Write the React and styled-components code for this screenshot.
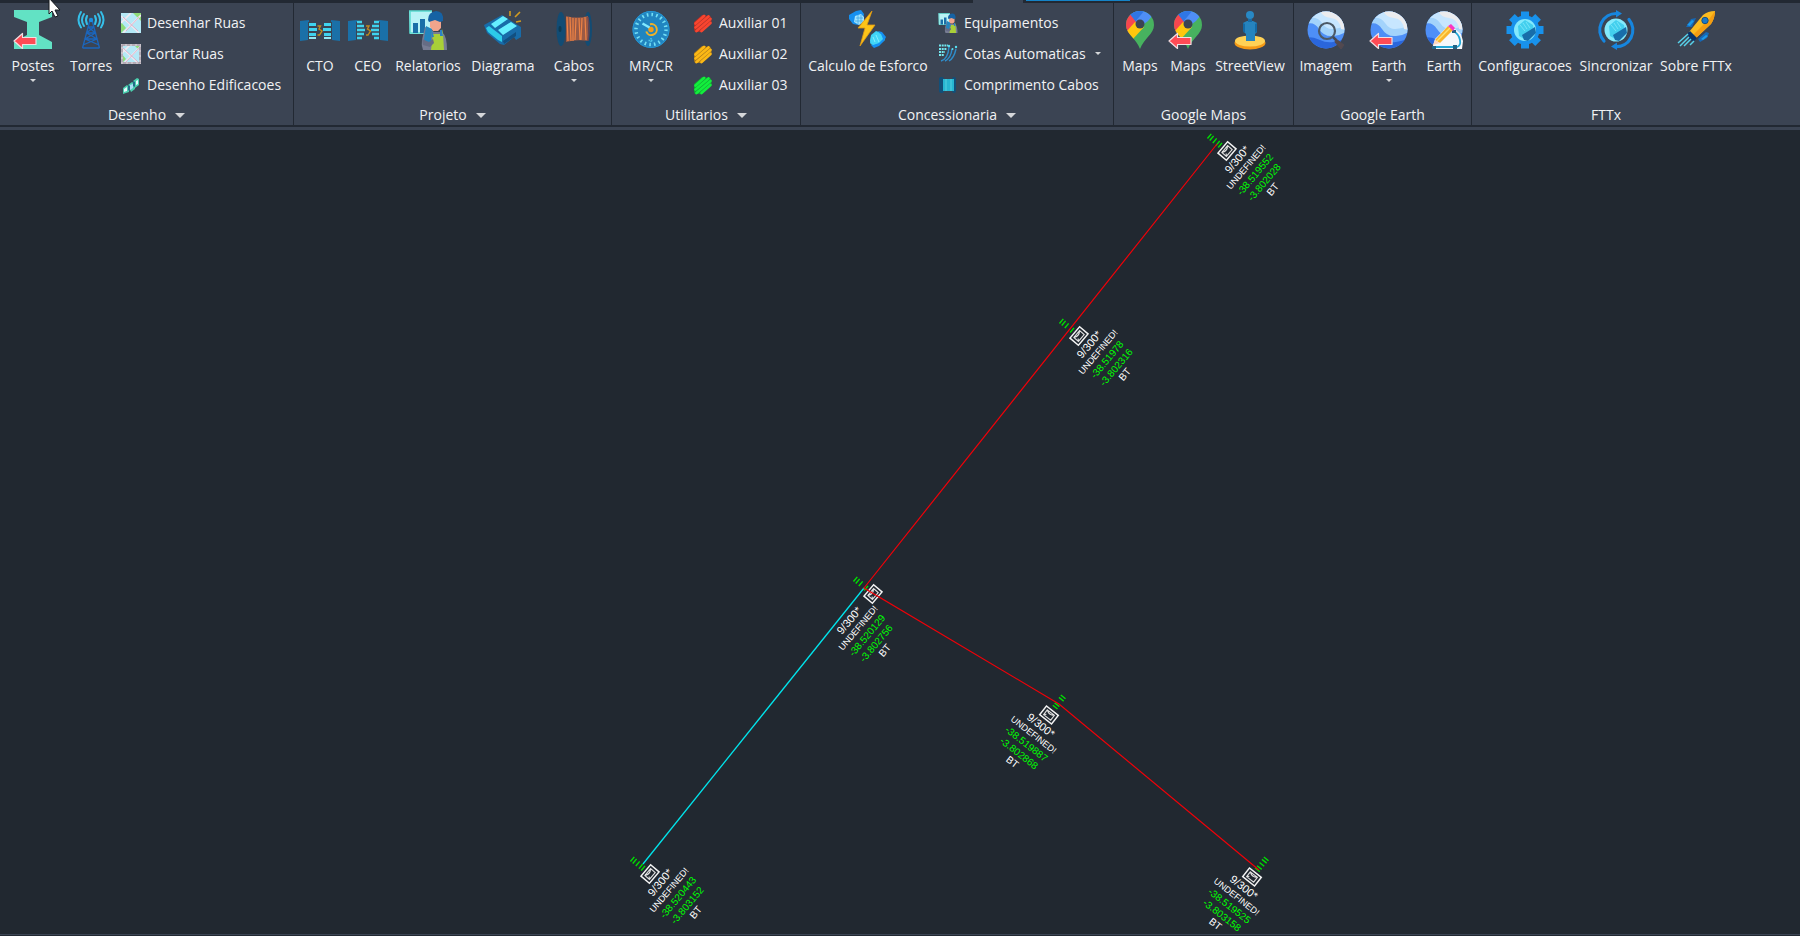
import React, { useId } from "react";
import styled, { createGlobalStyle } from "styled-components";

// css
const GlobalStyle = createGlobalStyle`
  * {
    box-sizing: border-box;
  }
  body {
    margin: 0;
    background: #212830;
    font-family: "Open Sans", "Noto Sans", sans-serif;
    overflow: hidden;
  }
`;
const Page = styled.div`
  display: flex;
  flex-direction: column;
  height: 100vh;
`;
const TabStrip = styled.div`
  height: 3px;
  flex: none;
  background: #222933;
  display: flex;
  padding-left: 973px;
  gap: 3px;
`;
const Tab = styled.div`
  width: ${(props) => props.$width};
  height: ${(props) => (props.$active ? "1px" : "3px")};
  background: ${(props) => (props.$active ? "#1583c7" : "#3b4453")};
`;
const Ribbon = styled.header`
  display: flex;
  flex: none;
  background: #3b4453;
  border-bottom: 2px solid #222933;
`;
const Panel = styled.section`
  flex: none;
  width: ${(props) => props.$width};
  display: flex;
  flex-direction: column;
  border-right: ${(props) => (props.$last ? "none" : "1px solid #222933")};
`;
const PanelBody = styled.div`
  display: flex;
  height: 100px;
  padding: ${(props) => props.$pad || "4px 0 0 2px"};
`;
const PanelTitle = styled.button`
  display: flex;
  align-items: center;
  justify-content: center;
  gap: 9px;
  height: 22px;
  padding: 2px 0 0;
  border: none;
  background: none;
  color: #f1f2f4;
  font-family: inherit;
  font-size: 14px;
  line-height: 20px;
`;
const Arrow = styled.span`
  border-left: ${(props) => props.$size} solid transparent;
  border-right: ${(props) => props.$size} solid transparent;
  border-top: ${(props) => props.$size} solid #d5d7da;
`;
const BigButton = styled.button`
  flex: none;
  width: ${(props) => props.$width};
  height: 80px;
  padding: 3px 0 0;
  border: none;
  background: none;
  display: flex;
  flex-direction: column;
  align-items: center;
  color: #f1f2f4;
  font-family: inherit;
  font-size: 14px;
  line-height: 20px;
  white-space: nowrap;
`;
const BigLabel = styled.span`
  margin: 6px 0 3px;
`;
const SmallList = styled.div`
  display: flex;
  flex-direction: column;
  padding-left: 5px;
`;
const SmallButton = styled.button`
  display: flex;
  align-items: center;
  gap: 6px;
  height: 31px;
  padding: 0;
  border: none;
  background: none;
  color: #f1f2f4;
  font-family: inherit;
  font-size: 14px;
  line-height: 20px;
  white-space: nowrap;
`;
const SmallArrow = styled(Arrow)`
  margin-left: 3px;
`;
const Divider = styled.div`
  flex: none;
  height: 3px;
  background: #3b4453;
`;
const Canvas = styled.main`
  flex: 1;
  min-height: 0;
  background: #212830;
`;
const Drawing = styled.svg`
  display: block;
  width: 100%;
  height: 100%;
  font-family: "Liberation Sans", sans-serif;
`;
const BottomLine = styled.div`
  flex: none;
  height: 2px;
  border-top: 1px solid #3b4453;
  background: #222933;
`;
const Cursor = styled.svg`
  position: absolute;
  left: 48px;
  top: 0;
`;

// icons
const Icon = ({ size = 40, box = 40, children }) => (
  <svg width={size} height={size} viewBox={`0 0 ${box} ${box}`} aria-hidden="true">
    {children}
  </svg>
);

const RedArrow = () => (
  <path
    d="M1 31l8.500-7.500v4H23v7H9.500v4z"
    fill="#ff4b55"
    stroke="#f3dfe2"
    strokeWidth="1.200"
    strokeLinejoin="round"
  />
);

const PosteIcon = () => (
  <Icon>
    <path d="M1 0h38v7l-13 5v13l13 7v7H1v-7l13-7V12L1 7z" fill="#62e2c4" />
    <RedArrow />
  </Icon>
);

const TorreIcon = () => (
  <Icon>
    <g fill="none" stroke="#1b66bd" strokeWidth="1.300">
      <path d="M11.500 38L19 10h2l7.500 28M17 17h6M15.500 23h9M14 29h12M11.500 38h17M17 17l7.500 6L14 29l14 6M23 17l-7.500 6L26 29l-14 6" />
    </g>
    <circle cx="20" cy="10" r="2.200" fill="#1b8fe0" />
    <g fill="none" stroke="#35bfe9" strokeWidth="2" strokeLinecap="round">
      <path d="M16 6q-2 4 0 8M13 4q-4 6 0 12M10 2q-5 8 0 15.500M24 6q2 4 0 8M27 4q4 6 0 12M30 2q5 8 0 15.500" />
    </g>
  </Icon>
);

const RuasIcon = ({ cut }) => (
  <Icon size={20} box={20}>
    <path d="M0 0h20v20H0z" fill="#b5e9f7" />
    <path d="M12 0h8v8zM0 9l5 6-5 5z" fill="#8fdb78" />
    <path d="M0 3l18 17M20 2L2 20M0 10L10 0" stroke="#f1e9f0" strokeWidth="1.600" />
    <path d="M2 4l15 14M18 4L5 18" stroke="#d59fbb" strokeWidth=".700" />
    {cut && (
      <>
        <path d="M1 1h18v18H1z" fill="none" stroke="#c9c3cb" strokeWidth="2" />
        <path d="M1 1h18v18H1z" fill="none" stroke="#8d7f8c" strokeWidth=".700" strokeDasharray="3 2" />
      </>
    )}
  </Icon>
);

const EdificacoesIcon = () => (
  <Icon size={20} box={20}>
    <path d="M2 13l4-3 2 2v5l-6 2zM7 10l4-3 3 2v5l-4 3zM12 6l4-3 2 1v6l-4 3z" fill="#4bcfae" />
    <path d="M3 14l3-2v4l-3 1zM15 6l2-1v4l-2 1z" fill="#e8fbff" />
    <path d="M9 10l3-1v4l-3 2z" fill="#a9def5" />
    <path d="M7 10l2 1v5l-2-1zM12 6l2 1v5l-2-1z" fill="#256a88" />
  </Icon>
);

const CtoIcon = () => (
  <Icon>
    <path d="M0 11l9-1v2h-1v18l-8 1zM40 11l-9-1v2h1v18l8 1z" fill="#1a70a8" />
    <path d="M9 13h7v3H9zM9 18h8v3H9zM9 23h7v3H9zM24 13h7v3h-7zM23 18h8v3h-8zM24 23h7v3h-7z" fill="#3fd3ee" />
    <path d="M9 27h7v2H9zM24 27h7v2h-7z" fill="#8fe9f5" />
    <path d="M17.500 16h3l-1.500 3 3 2-2.500 4h-2" fill="none" stroke="#c08a1d" strokeWidth="1.400" />
  </Icon>
);

const CeoIcon = () => (
  <Icon>
    <path d="M0 11l9-1v2h-1v18l-8 1zM40 11l-9-1v2h1v18l8 1z" fill="#1a70a8" />
    <path
      d="M9 12h5M9 16h7M9 20h8M9 24h7M9 28h5M31 12h-5M31 16h-7M31 20h-8M31 24h-7M31 28h-5"
      stroke="#3fd3ee"
      strokeWidth="2.400"
    />
    <path d="M18 16h3l-1.500 3 3 2-2.500 4h-2" fill="none" stroke="#c08a1d" strokeWidth="1.400" />
  </Icon>
);

const TecnicoIcon = ({ size }) => (
  <Icon size={size}>
    <path d="M1 1h23v23H2z" fill="#b9f3f6" />
    <path d="M1 1h23M2 1v22h14" fill="none" stroke="#59dbd0" strokeWidth="1.500" />
    <path d="M5 13h5v10H5zM12 9h5v14h-5z" fill="#1a6fa8" />
    <path d="M22 10h11v8l-3 3h-5l-3-4z" fill="#f0a48c" />
    <path d="M20 10q0-8 8-9 8 0 7 10l-3 1-5-2-6 2z" fill="#1662a4" />
    <path d="M17 17l5 2 4 3h8q5 4 5 18H15q-2-5-1-10z" fill="#777c93" />
    <path d="M25 24h8l1-5 1 4 1 17H23z" fill="#a9cf38" />
    <path d="M24 20l2 7h-2zM32 20h2l1 6h-3z" fill="#2b82c5" />
    <path d="M18 16l6 3-1 12-6 4-1-6z" fill="#2385be" />
    <path d="M14 29l7 3 4-3 1 4-4 4-7-2z" fill="#666c84" />
  </Icon>
);

const DiagramaIcon = () => (
  <Icon>
    <path d="M1 15l18-10 6 4 13 8v10l-5 3-2-3-10 8-4-1L4 23z" fill="#186ca9" />
    <path d="M3 18l3-2 13 10v6l-4-2L5 22z" fill="#2ccbe8" />
    <path d="M8 14l12-8 5 3-13 9zM15 20l13-8 6 4-14 9z" fill="#66efff" />
    <path d="M27 1v5M37 2l-5 5M33 12l5-1" stroke="#d29b20" strokeWidth="1.600" />
    <path d="M20 31l13-9v4l-12 8z" fill="#124f80" />
  </Icon>
);

const CabosIcon = () => (
  <Icon>
    <ellipse cx="7" cy="19" rx="4.500" ry="17" fill="#124c74" />
    <ellipse cx="34" cy="19" rx="4" ry="17" fill="#124c74" />
    <path d="M12 6q11 3 22 0v25q-11-2-22 1z" fill="#9a5a45" />
    <path
      d="M13 7l1 24M16 7l1 24M19 8v23M22 8l-1 22M25 8l1 22M28 8l-1 22M31 7l1 23"
      stroke="#ee8345"
      strokeWidth="1.200"
    />
    <path d="M34 7q2 12 0 24" fill="none" stroke="#6c4550" strokeWidth="1.500" />
    <ellipse cx="6" cy="19" rx="1.500" ry="3" fill="#0d3a52" />
  </Icon>
);

const MedidorIcon = () => (
  <Icon>
    <circle cx="20" cy="19.500" r="18.500" fill="#2185c0" />
    <circle
      cx="20"
      cy="19.500"
      r="15"
      fill="none"
      stroke="#74dff5"
      strokeWidth="3.500"
      strokeDasharray="1.600 3.112"
    />
    <circle cx="20" cy="19.500" r="18" fill="none" stroke="#2596d4" strokeWidth="1" />
    <path d="M15.200 21.500A5.500 5.500 0 1 0 19 14.200" fill="none" stroke="#eeb22a" strokeWidth="2" />
    <circle cx="20" cy="19.500" r="2.700" fill="#f59b16" />
    <path d="M18.500 17.500l-7-4" stroke="#80e9ff" strokeWidth="2.500" />
    <path d="M20 28v5M17.500 30.500h5" stroke="#4fc4e8" strokeWidth="1.500" strokeDasharray="1.500 1" />
  </Icon>
);

const FaixasIcon = ({ color, line }) => (
  <Icon size={20} box={20}>
    <path d="M1 9l8-7h4v1l3-1 2 2v3l1 1-10 11H2l-1-2z" fill={line} />
    <path
      d="M2.500 10.500L11 3M2.500 14.500L15.500 3.500M3.500 18L17.500 6M8.500 18L17.500 10"
      stroke={color}
      strokeWidth="2.700"
      strokeLinecap="round"
    />
  </Icon>
);

const EsforcoIcon = () => (
  <Icon>
    <path d="M1 5l7-4 5-1 3 4-1 6-5 5-5-1-4-5z" fill="#1590f0" />
    <path d="M7 6l6-2 3 3v5l-5 3-5-3z" fill="#9fe3ff" />
    <path d="M8 8h7M7 11h8M10 5v9M13 5v9" stroke="#3fa9e8" strokeWidth=".800" />
    <path d="M23 25l5-4 6 2 3 7-4 3-7 4-4-4z" fill="#35cdf2" />
    <path d="M30 21l4 1 4 5-2 4-5 5-5 2-3-3 7-2 4-6z" fill="#1590f0" />
    <path d="M23 26l5-4 5 2 2 5-4 4-6 2-3-4z" fill="#42d6f6" />
    <path d="M25 27l2 5M28 25l3 7" stroke="#8af0ff" strokeWidth=".900" />
    <path d="M24 1L10 18h7l-5 18 15-21h-8z" fill="#fcc419" stroke="#e39a10" strokeWidth=".800" />
  </Icon>
);

const CotasIcon = () => (
  <Icon size={20} box={20}>
    <path
      d="M1 1.500h9M1 5h8M1 8h6M1 11h5"
      stroke="#74e7ef"
      strokeWidth="2"
      strokeDasharray="2 .700"
    />
    <path d="M3 17q7-2 8-14M7 17q6-3 7-12M11 17q5-3 7-12" fill="none" stroke="#2f8dcb" strokeWidth="1.400" />
    <circle cx="11" cy="2" r="1.200" fill="#58dff0" />
    <circle cx="18" cy="3" r="1.200" fill="#58dff0" />
    <circle cx="14.500" cy="5" r="1" fill="#58dff0" />
  </Icon>
);

const BobinaIcon = () => (
  <Icon size={20} box={20}>
    <rect x="1" y="2" width="5" height="16" rx="2" fill="#124f78" />
    <rect x="14" y="2" width="4" height="16" rx="2" fill="#124f78" />
    <path d="M5 4h11v12H5z" fill="#27b6d2" />
    <path d="M8 4v12M13 4v12" stroke="#5ad4e2" strokeWidth=".900" />
  </Icon>
);

const MapsIcon = ({ arrow }) => {
  const id = useId();
  return (
    <Icon>
      <clipPath id={id}>
        <path d="M20 1a14 14 0 0 1 14 14c0 9-10 13-14 24C16 28 6 24 6 15A14 14 0 0 1 20 1z" />
      </clipPath>
      <g clipPath={`url(#${id})`}>
        <path d="M0 0h40v40H0z" fill="#47b25f" />
        <path d="M7 0h30L28 11l-8 6-8-8z" fill="#4f8ef5" />
        <path d="M7 4l8 8 10-12H8z" fill="#2f76e4" />
        <path d="M4 3h5l7 9-8 13H0z" fill="#f7464f" />
        <path d="M5 23l10-11 9 5-11 12z" fill="#ffc70d" />
      </g>
      <circle cx="20" cy="14" r="4.500" fill="#3b4453" />
      {arrow && <RedArrow />}
    </Icon>
  );
};

const StreetIcon = () => (
  <Icon>
    <ellipse cx="20" cy="33" rx="15.500" ry="6.500" fill="#f59a16" />
    <ellipse cx="20" cy="31" rx="15" ry="5.500" fill="#ffd256" />
    <path d="M13 13l4-2h6l4 2v9l-2 2v7h-9v-7l-2-2z" fill="#2684be" />
    <path d="M13 13l2 1v8l-1 1-1-2zM27 13l-2 1v8l1 1 1-2z" fill="#1469a4" />
    <circle cx="20" cy="5" r="4" fill="#2889c5" />
    <path d="M18 9h4v3h-4z" fill="#176ba6" />
  </Icon>
);

const Globe = () => {
  const id = useId();
  return (
    <>
      <clipPath id={id}>
        <circle cx="20" cy="20" r="18.500" />
      </clipPath>
      <g clipPath={`url(#${id})`}>
        <path d="M0 0h40v40H0z" fill="#4e8ff7" />
        <path d="M0 27q8 0 14 3t13 2 14-4v14H0z" fill="#2a66dc" />
        <path d="M0 14q8-3 13 5t14 7 14-5V0H0z" fill="#a3d3fb" />
        <path d="M4 8q8-1 12 5t10 6 14-3V0H4z" fill="#c7e6ff" />
        <path d="M14 0q2 7 11 8t10 11l6 1V0z" fill="#ececee" />
      </g>
    </>
  );
};

const ImagemIcon = () => (
  <Icon>
    <Globe />
    <circle cx="21" cy="21" r="8" fill="none" stroke="#4c5966" strokeWidth="2.200" />
    <path d="M27 27l3 3" stroke="#414b57" strokeWidth="2.500" />
    <path d="M30 29l8 6-3 4-6-7z" fill="#52494f" stroke="#52494f" strokeLinejoin="round" />
  </Icon>
);

const EarthIcon = () => (
  <Icon>
    <Globe />
    <RedArrow />
  </Icon>
);

const EarthEditIcon = () => (
  <Icon>
    <Globe />
    <path d="M11 29L25 15l6 4 6 5 2 7-1 8H8z" fill="#f4f7fa" />
    <path d="M10 37h23q4-1 3-7t-7-9" fill="none" stroke="#23a8d8" strokeWidth="1.800" />
    <path d="M8 36h4v3H8zM29 35h4v4h-4zM28 20h4v3h-4z" fill="#226486" />
    <path d="M11 30l13-14 5 4-13 13z" fill="#f9b52c" />
    <path d="M13 31l13-13" stroke="#ffe16d" strokeWidth="1.500" />
    <path d="M24 16l3-2 4 4-2 3z" fill="#fa37c5" />
    <path d="M11 30l5 3-7 2z" fill="#ffd6bc" />
  </Icon>
);

const HandDisc = ({ r }) => (
  <>
    <circle cx="20" cy="20" r={r} fill="#83e9fc" />
    <path d="M13 16l7-6 8 5 1 6-8 9-7-4z" fill="#43cfee" />
    <path d="M15 15l5 6M18 13l4 6M21 12l4 6" stroke="#75e4f8" strokeWidth="1" />
    <path d="M17 25l13-8 1 6-8 8-4-1z" fill="#186eaa" />
  </>
);

const ConfigIcon = () => (
  <Icon>
    <g fill="#1892ec">
      <circle cx="20" cy="20" r="14.500" />
      {[0, 45, 90, 135].map((a) => (
        <rect key={a} x="16" y="1.500" width="8" height="37" transform={`rotate(${a} 20 20)`} />
      ))}
    </g>
    <HandDisc r={11} />
  </Icon>
);

const SincronizarIcon = () => (
  <Icon>
    <path
      d="M8 31A16.500 16.500 0 0 1 21 3.500M33 9.500A16.500 16.500 0 0 1 19 36.500"
      fill="none"
      stroke="#1686df"
      strokeWidth="3.200"
      strokeLinecap="round"
    />
    <path d="M20 0l6 3.500-6 4zM21 40l-6-3.500 6-4z" fill="#1686df" />
    <HandDisc r={11.500} />
  </Icon>
);

const FogueteIcon = () => (
  <Icon>
    <path d="M10 17l5-8 5-1-4 9zM22 29l8-7 3 1-2 5-7 4z" fill="#1569b7" />
    <path d="M11 15l5-5 2 1-4 5zM25 29l5-4 2 1-5 4z" fill="#1d9aea" />
    <path d="M13 22L27 5q5-4 12-4 0 7-4 13L20 28z" fill="#fbbb20" />
    <path d="M39 1q0 7-4 13L20 28l-3-3L34 8z" fill="#f49d12" />
    <circle cx="29" cy="10.500" r="3.200" fill="#1b78c8" stroke="#195181" strokeWidth="1" />
    <path d="M12 23l2-2 7 7-3 3-5-1z" fill="#07346b" />
    <path d="M12 24l-10 9M13 27L4 36M15 29l-7 7M18 31l-4 4" stroke="#58d2ea" strokeWidth="1.500" />
  </Icon>
);

const GROUPS = [
  {
    title: "Desenho",
    menu: true,
    width: "294px",
    pad: "4px 0 0",
    big: [
      { label: "Postes", icon: <PosteIcon />, width: "66px", menu: true },
      { label: "Torres", icon: <TorreIcon />, width: "50px" },
    ],
    small: [
      { label: "Desenhar Ruas", icon: <RuasIcon /> },
      { label: "Cortar Ruas", icon: <RuasIcon cut /> },
      { label: "Desenho Edificacoes", icon: <EdificacoesIcon /> },
    ],
  },
  {
    title: "Projeto",
    menu: true,
    width: "318px",
    big: [
      { label: "CTO", icon: <CtoIcon />, width: "48px" },
      { label: "CEO", icon: <CeoIcon />, width: "48px" },
      { label: "Relatorios", icon: <TecnicoIcon />, width: "72px" },
      { label: "Diagrama", icon: <DiagramaIcon />, width: "78px" },
      { label: "Cabos", icon: <CabosIcon />, width: "64px", menu: true },
    ],
  },
  {
    title: "Utilitarios",
    menu: true,
    width: "189px",
    big: [{ label: "MR/CR", icon: <MedidorIcon />, width: "74px", menu: true }],
    small: [
      { label: "Auxiliar 01", icon: <FaixasIcon color="#f8452f" line="#a5302b" /> },
      { label: "Auxiliar 02", icon: <FaixasIcon color="#fbb815" line="#a5761c" /> },
      { label: "Auxiliar 03", icon: <FaixasIcon color="#12ee3c" line="#149b35" /> },
    ],
  },
  {
    title: "Concessionaria",
    menu: true,
    width: "313px",
    big: [{ label: "Calculo de Esforco", icon: <EsforcoIcon />, width: "130px" }],
    small: [
      { label: "Equipamentos", icon: <TecnicoIcon size={20} /> },
      { label: "Cotas Automaticas", icon: <CotasIcon />, menu: true },
      { label: "Comprimento Cabos", icon: <BobinaIcon /> },
    ],
  },
  {
    title: "Google Maps",
    width: "180px",
    big: [
      { label: "Maps", icon: <MapsIcon />, width: "48px" },
      { label: "Maps", icon: <MapsIcon arrow />, width: "48px" },
      { label: "StreetView", icon: <StreetIcon />, width: "76px" },
    ],
  },
  {
    title: "Google Earth",
    width: "178px",
    big: [
      { label: "Imagem", icon: <ImagemIcon />, width: "60px" },
      { label: "Earth", icon: <EarthIcon />, width: "66px", menu: true },
      { label: "Earth", icon: <EarthEditIcon />, width: "44px" },
    ],
  },
  {
    title: "FTTx",
    width: "268px",
    big: [
      { label: "Configuracoes", icon: <ConfigIcon />, width: "102px" },
      { label: "Sincronizar", icon: <SincronizarIcon />, width: "80px" },
      { label: "Sobre FTTx", icon: <FogueteIcon />, width: "80px" },
    ],
  },
];

// postes: tx/ty move the text block away from the symbol
const POSTES = [
  { x: 1227, y: 21, angle: -50, lon: "-38.519552", lat: "-3.802028", ticks: [-23, -20, -16, -12, -9] },
  { x: 1079, y: 206, angle: -50, lon: "-38.51978", lat: "-3.802316", ticks: [-23, -20, -16, -9] },
  { x: 873, y: 464, angle: -50, lon: "-38.520129", lat: "-3.802756", ticks: [-23, -20, -16, -9], tx: -34, ty: 18 },
  { x: 1049, y: 585, angle: 38, lon: "-38.519887", lat: "-3.802868", ticks: [-23, -20, -13, -10] },
  { x: 1252, y: 747, angle: 38, lon: "-38.519525", lat: "-3.803158", ticks: [-23, -20, -16, -12, -9] },
  { x: 650, y: 744, angle: -50, lon: "-38.520443", lat: "-3.803152", ticks: [-23, -20, -16, -12, -9] },
];

const Poste = ({ x, y, angle, lon, lat, ticks, tx = 0, ty = 0 }) => (
  <>
    <g transform={`translate(${x} ${y}) rotate(${angle})`} fill="none">
      {ticks.map((t) => (
        <path key={t} d={`M-3 ${t}h6`} stroke="#00e000" strokeWidth="1.400" />
      ))}
      <rect x="-7.500" y="-5.500" width="15" height="11" stroke="#f4f4f4" strokeWidth="1.500" />
      <path d="M-4.500 -3h9v6h-9zM-4.500 -3q4.500 3.500 9 0M-4.500 3l2-2" stroke="#e0e0e0" strokeWidth="1.100" />
    </g>
    <g transform={`translate(${x + tx} ${y + ty}) rotate(${angle})`} textAnchor="middle" fill="#fff">
      <text y="17" fontSize="11">9/300*</text>
      <text y="28" fontSize="9">UNDEFINED!</text>
      <text y="40" fontSize="10" fill="#00ff00">{lon}</text>
      <text y="52" fontSize="10" fill="#00ff00">{lat}</text>
      <text y="63" fontSize="10">BT</text>
    </g>
  </>
);

export default function App() {
  return (
    <Page>
      <GlobalStyle />
      <TabStrip>
        <Tab $width="50px" />
        <Tab $width="104px" $active />
      </TabStrip>
      <Ribbon>
        {GROUPS.map((group, i) => (
          <Panel key={group.title} $width={group.width} $last={i === GROUPS.length - 1}>
            <PanelBody $pad={group.pad}>
              {group.big.map((item, n) => (
                <BigButton key={n} type="button" $width={item.width}>
                  {item.icon}
                  <BigLabel>{item.label}</BigLabel>
                  {item.menu && <Arrow $size="3px" />}
                </BigButton>
              ))}
              {group.small && (
                <SmallList>
                  {group.small.map((item) => (
                    <SmallButton key={item.label} type="button">
                      {item.icon}
                      {item.label}
                      {item.menu && <SmallArrow $size="3px" />}
                    </SmallButton>
                  ))}
                </SmallList>
              )}
            </PanelBody>
            <PanelTitle type="button">
              {group.title}
              {group.menu && <Arrow $size="5px" />}
            </PanelTitle>
          </Panel>
        ))}
      </Ribbon>
      <Divider />
      <Canvas>
        <Drawing>
          {POSTES.map((poste) => (
            <Poste key={poste.lon} {...poste} />
          ))}
          <path d="M643 734L864 458" stroke="#00e5ec" strokeWidth="1.300" />
          <path d="M1217 14L864 458L1059 574L1259 740" fill="none" stroke="#f00008" strokeWidth="1.200" />
        </Drawing>
      </Canvas>
      <BottomLine />
      <Cursor width="14" height="19" viewBox="0 0 14 19" aria-hidden="true">
        <path d="M1-2v16l3-3 3 6 3-1-3-6h5z" fill="#fff" stroke="#15181d" strokeWidth="1" />
      </Cursor>
    </Page>
  );
}
